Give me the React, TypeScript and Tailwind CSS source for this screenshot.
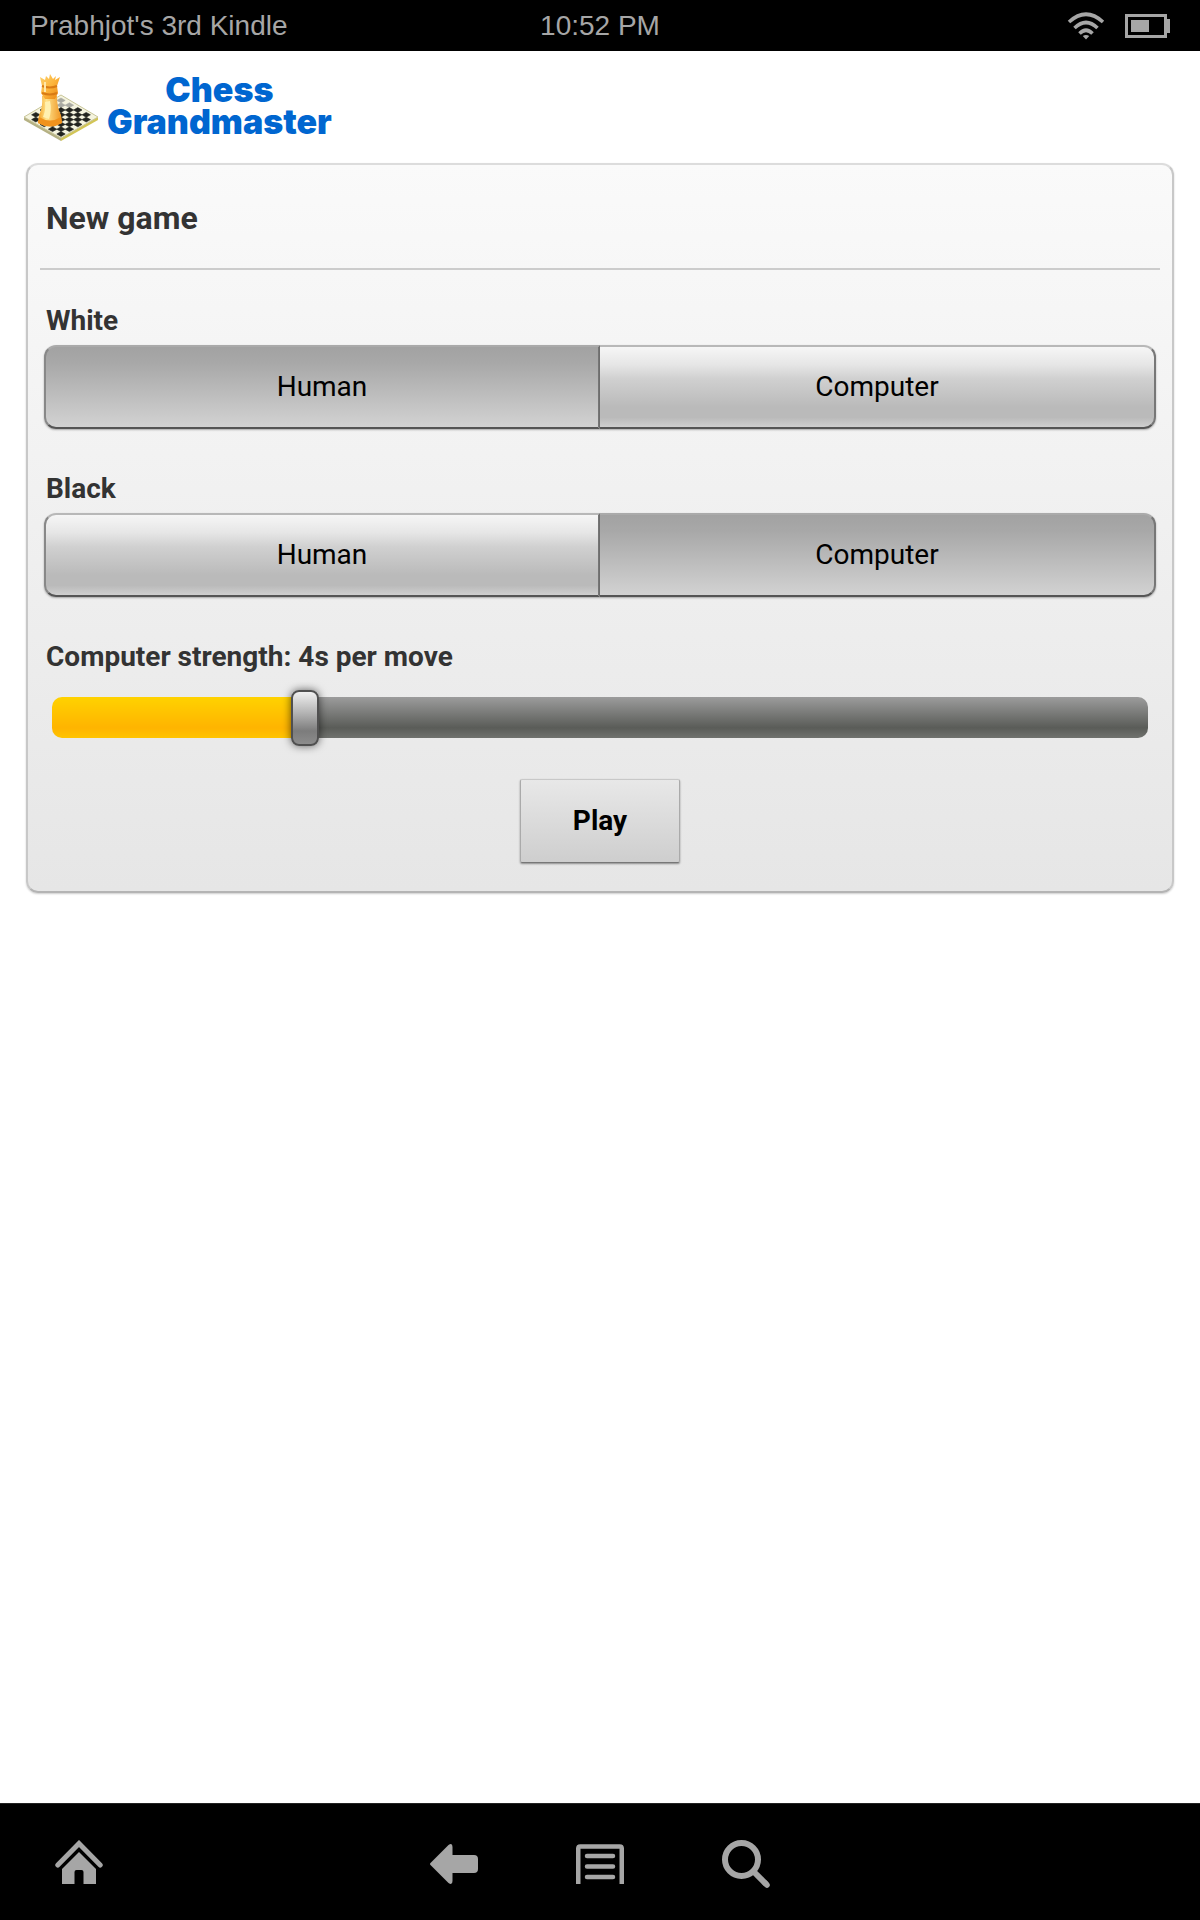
import { useState } from 'react';

const PLAYERS = ['Human', 'Computer'];
const BOARD = Array.from({ length: 64 }, (_, i) => ({
  row: Math.floor(i / 8),
  col: i % 8,
}));

// maps a board corner (0..8, 0..8) to the tilted board of the logo
const boardPoint = (col: number, row: number) =>
  `${38 + (col - row) * 4.2},${24 + (col + row) * 2.4}`;

const Logo = () => (
  <svg width="76" height="67" viewBox="0 0 76 67" aria-hidden="true">
    <defs>
      <linearGradient id="gold" x1="0" x2="1" y1="0" y2="1">
        <stop offset="0" stopColor="#fbd36f" />
        <stop offset="0.5" stopColor="#fdb53c" />
        <stop offset="1" stopColor="#e98412" />
      </linearGradient>
      <linearGradient id="base" x1="0" x2="1">
        <stop offset="0" stopColor="#f3a024" />
        <stop offset="0.35" stopColor="#ffe28a" />
        <stop offset="1" stopColor="#ee9320" />
      </linearGradient>
    </defs>
    <path d="M1 43 L38 62 V67 L1 46Z" fill="#b5b184" />
    <path d="M75 43 L38 62 V67 L75 46Z" fill="#d2c556" />
    <path d="M38 21 L75 43 L38 64 L1 43Z" fill="#f5f4df" stroke="#c9c69a" />
    {BOARD.filter((c) => (c.row + c.col) % 2 === 0).map(({ row, col }) => (
      <polygon
        key={`${row}-${col}`}
        points={`${boardPoint(col, row)} ${boardPoint(col + 1, row)} ${boardPoint(col + 1, row + 1)} ${boardPoint(col, row + 1)}`}
        fill={row + col < 4 ? '#a9aaa2' : '#22241f'}
        stroke={row + col < 4 ? '#a9aaa2' : '#22241f'}
        strokeWidth="0.6"
      />
    ))}
    <path
      d="M19 22 Q27 19 34 22 Q34 34 38 41 L39 49 Q27 56 15 49 L16 41 Q20 34 19 22Z"
      fill="url(#base)"
    />
    <path d="M16 43 Q27 50 38 43 L39 49 Q27 56 15 49Z" fill="#f0921c" />
    <path d="M22 28 Q23 36 20 43 L26 45 Q29 36 27 27Z" fill="#fff0b0" />
    <path
      d="M17 3 L22 6 L23 2 L26 5 L27 0 L30 5 L33 2 L32 6 L37 3 L34 12 L35 19 L32 25 H22 L18 19 L19 12Z"
      fill="url(#gold)"
    />
    <path d="M19 12 Q27 15 34 12 M19 19 Q27 22 34 19" stroke="#d97b14" strokeWidth="2" fill="none" />
    <path d="M22 8 V18" stroke="#ffe8a8" strokeWidth="2" />
  </svg>
);

const StatusBar = () => (
  <div className="grid h-[51px] grid-cols-3 items-center bg-black px-[30px] font-['Liberation_Sans',Arial,sans-serif] text-[28px] leading-8 text-[#a6a6a6]">
    <span className="whitespace-nowrap">Prabhjot's 3rd Kindle</span>
    <span className="text-center">10:52 PM</span>
    <div className="flex items-center justify-end gap-5">
      <svg width="38" height="28" viewBox="0 0 38 28" fill="none" stroke="#a6a6a6" strokeWidth="3.6" aria-label="Wi-Fi" role="img">
        <path d="M2 10 Q19 -5.500 36 10" />
        <path d="M7.500 16 Q19 5 30.500 16" />
        <path d="M12.500 21.500 Q19 15 25.500 21.500" />
        <path d="M19 27.500 L15.800 24 Q19 21.800 22.200 24Z" fill="#a6a6a6" stroke="none" />
      </svg>
      <svg width="45" height="24" viewBox="0 0 45 24" aria-label="Battery" role="img">
        <rect x="1.500" y="1.500" width="39" height="21" fill="none" stroke="#a6a6a6" strokeWidth="3" />
        <rect x="6" y="6" width="18" height="12" fill="#a6a6a6" />
        <rect x="41" y="5" width="4" height="14" fill="#a6a6a6" />
      </svg>
    </div>
  </div>
);

const PlayerPicker = (props: {
  side: string;
  value: string;
  onChange: (value: string) => void;
}) => {
  const { side, value, onChange } = props;

  return (
    <fieldset className="mb-10">
      <legend className="mb-1 px-0.5 text-[28px] leading-10 font-bold text-[#333]">
        {side}
      </legend>
      <div className="grid grid-cols-2 text-[28px] text-black">
        {PLAYERS.map((player) => (
          <label
            key={player}
            className="flex h-[84px] cursor-pointer items-center justify-center border-2 border-t-[#b8b8b8] border-r-[#777] border-b-[#555] border-l-[#888] bg-[linear-gradient(#f6f6f6,#e6e6e6_22%,#d0d0d0_40%,#bababa_75%,#bababa_88%,#cfcfcf)] shadow-[0_1px_2px_rgba(0,0,0,0.3)] first:rounded-l-xl last:rounded-r-xl last:border-l-0 has-checked:border-t-[#aaa] has-checked:bg-[linear-gradient(#a2a2a2,#a8a8a8_20%,#d2d2d2)] has-focus-visible:outline-2"
          >
            <input
              type="radio"
              name={side}
              value={player}
              checked={value === player}
              onChange={() => onChange(player)}
              className="sr-only"
            />
            {player}
          </label>
        ))}
      </div>
    </fieldset>
  );
};

const NavBar = () => (
  <nav className="grid h-[117px] grid-cols-[1fr_auto_1fr] items-center border-t border-[#222] bg-black px-[55px] pt-1 text-[#a6a6a6]">
    <button aria-label="Home" className="size-12">
      <svg width="48" height="48" viewBox="0 0 48 48" fill="currentColor">
        <path d="M2.800 25 L24 3.500 L45.200 25" fill="none" stroke="currentColor" strokeWidth="5" strokeLinecap="round" strokeLinejoin="miter" />
        <path d="M24 12 L41 29 V44 H28.500 V32 Q28.500 30 26.500 30 H21.500 Q19.500 30 19.500 32 V44 H7 V29Z" />
      </svg>
    </button>
    <div className="flex gap-[98px]">
      <button aria-label="Back" className="size-12">
        <svg width="48" height="48" viewBox="0 0 48 48" fill="currentColor">
          <path d="M0.500 23 L18.500 5 Q22.500 2.500 22.500 7 V15 H44 Q48 15 48 19 V29 Q48 33 44 33 H22.500 V41 Q22.500 45.500 18.500 43 L0.500 25 Q-0.500 24 0.500 23Z" />
        </svg>
      </button>
      <button aria-label="Menu" className="size-12">
        <svg width="48" height="48" viewBox="0 0 48 48" fill="none" stroke="currentColor">
          <path d="M2.250 44 V8.500 Q2.250 6.500 4.250 6.500 H43.750 Q45.750 6.500 45.750 8.500 V44" strokeWidth="4.500" />
          <path d="M11 16 H37 M11 26.500 H37 M11 37 H37" strokeWidth="4.500" strokeLinecap="round" />
        </svg>
      </button>
      <button aria-label="Search" className="size-12">
        <svg width="48" height="48" viewBox="0 0 48 48" fill="none" stroke="currentColor">
          <circle cx="19.500" cy="19.500" r="16.500" strokeWidth="6" />
          <path d="M32 32 L44.500 44.500" strokeWidth="6" strokeLinecap="butt" />
          <path d="M43 43 L45 45" strokeWidth="5.500" strokeLinecap="round" />
        </svg>
      </button>
    </div>
  </nav>
);

const App = () => {
  const [white, setWhite] = useState('Human');
  const [black, setBlack] = useState('Computer');
  const [strength, setStrength] = useState(224);

  const seconds = Math.max(1, Math.round(strength / 56));

  return (
    <div className="flex min-h-screen flex-col bg-white font-[Roboto,sans-serif]">
      <StatusBar />

      <header className="flex items-start gap-2 px-[23px] pt-[23px] pb-[22px]">
        <Logo />
        <h1 className="text-center font-[Inter,sans-serif] text-[34px] leading-8 font-black text-[#0066d0]">
          Chess
          <br />
          Grandmaster
        </h1>
      </header>

      <main className="flex-1 px-[26px]">
        <form
          onSubmit={(e) => e.preventDefault()}
          className="rounded-xl border-2 border-t-[#dcdcdc] border-r-[#c8c8c8] border-b-[#b4b4b4] border-l-[#c8c8c8] bg-linear-to-b from-[#fafafa] to-[#e6e6e6] px-3 pb-7 shadow-[0_1px_2px_rgba(0,0,0,0.2)]"
        >
          <h2 className="border-b-2 border-[#ccc] px-1.5 pt-[33px] pb-[30px] text-[32px] leading-10 font-bold text-[#333]">
            New game
          </h2>

          <div className="px-1 pt-[31px]">
            <PlayerPicker side="White" value={white} onChange={setWhite} />
            <PlayerPicker side="Black" value={black} onChange={setBlack} />

            <label
              htmlFor="strength"
              className="block px-0.5 text-[28px] leading-10 font-bold text-[#333]"
            >
              Computer strength: {seconds}s per move
            </label>
            <div className="mt-5 px-2">
              <input
                id="strength"
                type="range"
                min={0}
                max={1000}
                value={strength}
                onChange={(e) => setStrength(Number(e.target.value))}
                style={{ backgroundSize: `${strength / 10}% 100%, 100% 100%` }}
                className="block h-[41px] w-full cursor-pointer appearance-none rounded-[10px] bg-[linear-gradient(#ffd200,#ffb400_75%,#ffc400),linear-gradient(#9c9c9c,#5a5c58_75%,#70726e)] bg-no-repeat [&::-webkit-slider-thumb]:h-14 [&::-webkit-slider-thumb]:w-7 [&::-webkit-slider-thumb]:appearance-none [&::-webkit-slider-thumb]:rounded-lg [&::-webkit-slider-thumb]:border-2 [&::-webkit-slider-thumb]:border-[#505050] [&::-webkit-slider-thumb]:bg-[linear-gradient(#f0f0f0,#b4b4b4_40%,#7c7c7c_75%,#8c8c8c)] [&::-webkit-slider-thumb]:shadow-[0_0_8px_rgba(0,0,0,0.6)]"
              />
            </div>

            <div className="mt-[41px] flex justify-center">
              <button
                type="submit"
                className="h-[84px] w-40 rounded-xs border border-t-[#c8c8c8] border-r-[#aaa] border-b-[#777] border-l-[#aaa] bg-linear-to-b from-[#e8e8e8] to-[#cecece] text-[28px] font-bold text-black shadow-[0_1px_2px_rgba(0,0,0,0.4)]"
              >
                Play
              </button>
            </div>
          </div>
        </form>
      </main>

      <NavBar />
    </div>
  );
};

export default App;
